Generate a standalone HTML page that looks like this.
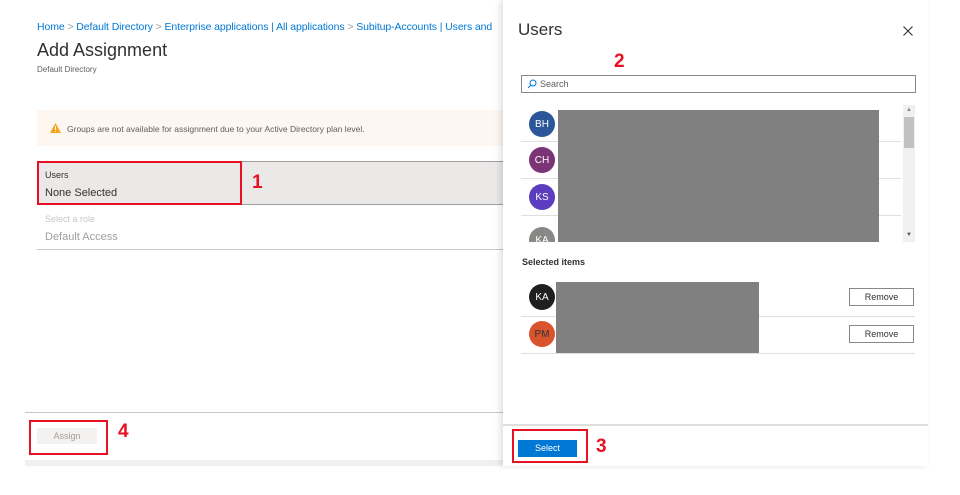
<!DOCTYPE html>
<html><head><meta charset="utf-8"><style>
*{margin:0;padding:0;box-sizing:border-box}
body{width:960px;height:495px;background:#fff;position:relative;overflow:hidden;font-family:"Liberation Sans",sans-serif;color:#323130}
.a{position:absolute}
.av{position:absolute;width:26px;height:26px;border-radius:50%;color:#fff;font-size:10px;text-align:center;line-height:27px}
.red{position:absolute;border:2px solid #e81123}
.num{position:absolute;color:#e81123;font-weight:bold;font-size:19px}
.sep{position:absolute;height:1px;background:#e1dfdd}
.rm{position:absolute;left:849px;width:65px;height:18px;border:1px solid #8a8886;background:#fff;font-size:9px;text-align:center;line-height:16px;color:#323130}
</style></head><body>
<div class="a" style="left:0;top:0;width:503px;height:466px;background:#fff"></div>
<div class="a" style="left:37px;top:21px;font-size:10.5px;color:#0078d4;white-space:nowrap;letter-spacing:-0.1px">Home <span style="color:#999">&gt;</span> Default Directory <span style="color:#999">&gt;</span> Enterprise applications | All applications <span style="color:#999">&gt;</span> Subitup-Accounts | Users and</div>
<div class="a" style="left:37px;top:40px;font-size:18px;color:#323130">Add Assignment</div>
<div class="a" style="left:37px;top:65px;font-size:8px;color:#605e5c">Default Directory</div>
<div class="a" style="left:37px;top:110px;width:466px;height:36px;background:#fdf6f1"></div>
<svg class="a" style="left:50px;top:123px" width="11" height="10" viewBox="0 0 11 10"><path d="M5.5 0 L11 10 L0 10Z" fill="#f7a41d"/><rect x="5" y="3" width="1" height="4" fill="#fff"/><rect x="5" y="8" width="1" height="1" fill="#fff"/></svg>
<div class="a" style="left:67px;top:124px;font-size:8.5px;color:#605e5c">Groups are not available for assignment due to your Active Directory plan level.</div>
<div class="a" style="left:37px;top:161px;width:466px;height:44px;background:#ebe9e8;border-top:1px solid #a19f9d;border-bottom:1px solid #a19f9d"></div>
<div class="a" style="left:45px;top:170px;font-size:9px">Users</div>
<div class="a" style="left:45px;top:187px;font-size:11px">None Selected</div>
<div class="red" style="left:37px;top:161px;width:205px;height:44px"></div>
<div class="num" style="left:252px;top:172px">1</div>
<div class="a" style="left:45px;top:214px;font-size:9px;color:#c8c6c4">Select a role</div>
<div class="a" style="left:45px;top:231px;font-size:11px;color:#a19f9d">Default Access</div>
<div class="sep" style="left:37px;top:249px;width:466px;background:#c8c6c4"></div>
<div class="sep" style="left:25px;top:412px;width:478px;background:#c8c6c4"></div>
<div class="a" style="left:37px;top:428px;width:60px;height:16px;background:#f3f2f1;color:#a19f9d;font-size:9px;text-align:center;line-height:16px">Assign</div>
<div class="red" style="left:29px;top:420px;width:79px;height:35px"></div>
<div class="num" style="left:118px;top:421px">4</div>
<div class="a" style="left:25px;top:460px;width:478px;height:6px;background:#f0f0f0"></div>

<div class="a" style="left:503px;top:0;width:425px;height:466px;background:#fff;box-shadow:-3px 0 6px rgba(0,0,0,.12)"></div>
<div class="a" style="left:518px;top:20px;font-size:17px">Users</div>
<svg class="a" style="left:903px;top:26px" width="10" height="10" viewBox="0 0 10 10"><path d="M0.5 0.5 L9.5 9.5 M9.5 0.5 L0.5 9.5" stroke="#323130" stroke-width="1.1"/></svg>
<div class="num" style="left:614px;top:51px">2</div>
<div class="a" style="left:521px;top:75px;width:395px;height:18px;border:1px solid #8a8886"></div>
<svg class="a" style="left:527px;top:79px" width="10" height="10" viewBox="0 0 10 10"><circle cx="6" cy="4" r="3" fill="none" stroke="#0078d4"/><path d="M4 6 L1 9" stroke="#0078d4"/></svg>
<div class="a" style="left:540px;top:79px;font-size:9px;color:#605e5c">Search</div>
<div class="sep" style="left:521px;top:141px;width:380px"></div>
<div class="sep" style="left:521px;top:178px;width:380px"></div>
<div class="sep" style="left:521px;top:215px;width:380px"></div>
<div class="av" style="left:529px;top:111px;background:#2b579a">BH</div>
<div class="av" style="left:529px;top:147px;background:#7b3476">CH</div>
<div class="av" style="left:529px;top:184px;background:#5c3dbf">KS</div>
<div class="a" style="left:521px;top:222px;width:380px;height:20px;overflow:hidden"><div class="av" style="left:8px;top:5px;background:#8a8886">KA</div></div>
<div class="a" style="left:558px;top:110px;width:321px;height:132px;background:#808080"></div>
<div class="a" style="left:903px;top:105px;width:12px;height:137px;background:#f0f0f0"></div>
<div class="a" style="left:904px;top:117px;width:10px;height:31px;background:#c1c1c1"></div>
<div class="a" style="left:906px;top:107px;font-size:6px;color:#888">▲</div>
<div class="a" style="left:906px;top:232px;font-size:6px;color:#555">▼</div>
<div class="a" style="left:522px;top:257px;font-size:9px;font-weight:bold">Selected items</div>
<div class="sep" style="left:521px;top:316px;width:394px"></div>
<div class="sep" style="left:521px;top:353px;width:394px"></div>
<div class="av" style="left:529px;top:284px;background:#1f1f1f">KA</div>
<div class="av" style="left:529px;top:321px;background:#d9532c;color:#333">PM</div>
<div class="a" style="left:556px;top:282px;width:203px;height:71px;background:#808080"></div>
<div class="rm" style="top:288px">Remove</div>
<div class="rm" style="top:325px">Remove</div>
<div class="sep" style="left:503px;top:424px;width:425px;background:#e1dfdd;height:2px"></div>
<div class="a" style="left:518px;top:440px;width:59px;height:17px;background:#0078d4;color:#fff;font-size:9px;text-align:center;line-height:17px">Select</div>
<div class="red" style="left:512px;top:429px;width:76px;height:34px"></div>
<div class="num" style="left:596px;top:436px">3</div>
</body></html>
